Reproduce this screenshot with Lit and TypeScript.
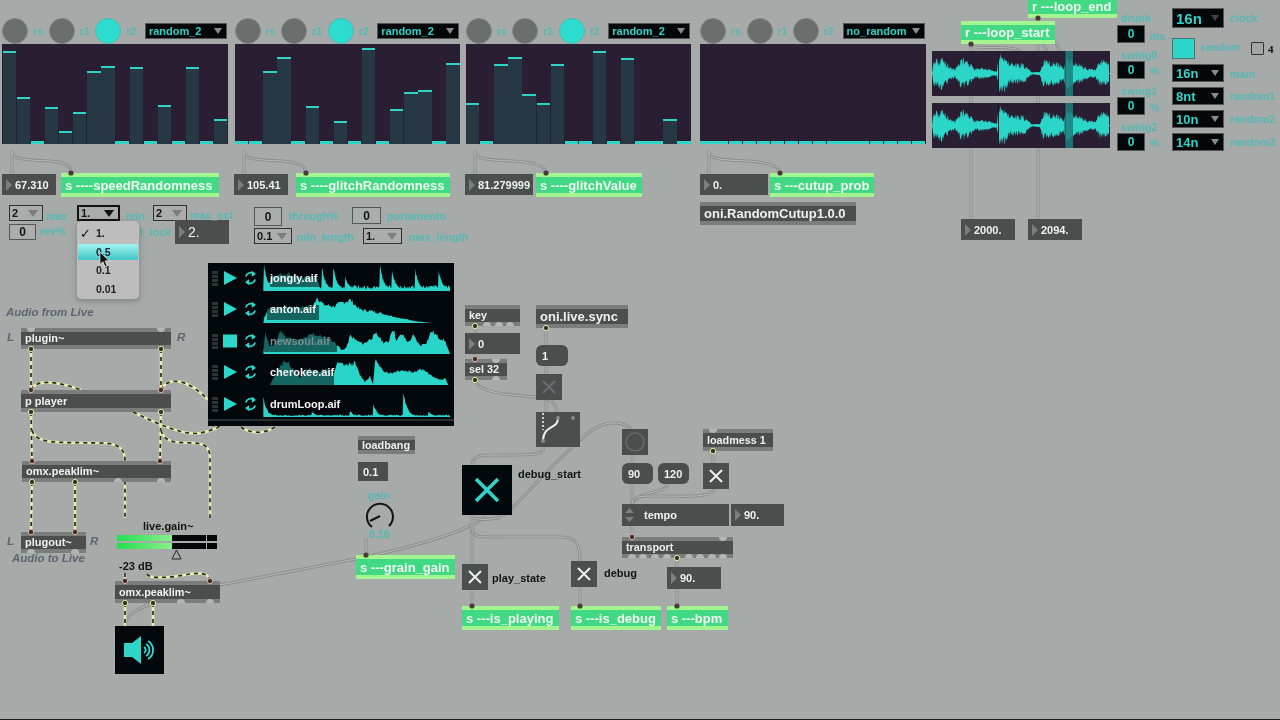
import { LitElement, html, svg, css } from "lit";
import { customElement } from "lit/decorators.js";

// max patch canvas: everything below is placed by patch coordinates
const TEAL = "#2dd6c9";

function rng(seed: number) {
  let s = seed;
  return () => {
    s = (s * 9301 + 49297) % 233280;
    return s / 233280;
  };
}

function interp(pts: number[][], x: number) {
  for (let i = 1; i < pts.length; i++) {
    if (x <= pts[i][0]) {
      const [x0, y0] = pts[i - 1];
      const [x1, y1] = pts[i];
      return y0 + ((y1 - y0) * (x - x0)) / (x1 - x0 || 1);
    }
  }
  return 0;
}

// pts come from the 3x crops, so x/3 and h/3 gets back to patch pixels
function hillPath(pts: number[][], base: number, seed: number) {
  const r = rng(seed);
  let d = "";
  const x0 = pts[0][0];
  const x1 = pts[pts.length - 1][0];
  for (let x = x0; x <= x1; x += 3) {
    const h = (interp(pts, x) * (0.88 + r() * 0.24)) / 3;
    d += `${d ? "L" : "M"}${200 + x / 3} ${base - h} `;
  }
  return `${d}L${200 + x1 / 3} ${base} L${200 + x0 / 3} ${base} Z`;
}

function spikePath(spikes: number[][], x0: number, x1: number, base: number, floor: number, tau: number, seed: number) {
  const r = rng(seed);
  let d = `M${200 + x0 / 3} ${base} `;
  for (let x = x0; x <= x1; x += 2) {
    let h = floor * (0.5 + r());
    for (const [sx, sh] of spikes) {
      if (x >= sx) h = Math.max(h, sh * Math.exp(-(x - sx) / tau) * (0.85 + r() * 0.2));
    }
    d += `L${200 + x / 3} ${base - h / 3} `;
  }
  return `${d}L${200 + x1 / 3} ${base} Z`;
}

function mirrorPath(pts: number[][], mid: number, seed: number) {
  const r = rng(seed);
  const up: string[] = [];
  const down: string[] = [];
  for (let x = pts[0][0]; x <= pts[pts.length - 1][0]; x += 1.5) {
    const a = interp(pts, x) / 3;
    const px = 900 + x / 3;
    up.push(`${px} ${mid - a * (0.6 + r() * 0.7)}`);
    down.unshift(`${px} ${mid + a * (0.6 + r() * 0.7)}`);
  }
  return `M${up.join(" L")} L${down.join(" L")} Z`;
}

const PANELS = [
  { x: 2.3, on: 2, menu: "random_2", bars: [153, 290, 430, 322, 394, 335, 214, 198, 430, 202, 430, 315, 430, 202, 430, 358] },
  { x: 234.7, on: 2, menu: "random_2", bars: [430, 430, 214, 172, 430, 319, 430, 364, 430, 143, 430, 328, 276, 269, 430, 188] },
  { x: 465.7, on: 2, menu: "random_2", bars: [309, 430, 191, 172, 283, 309, 191, 430, 430, 153, 430, 175, 430, 430, 357, 430] },
  { x: 700, on: -1, menu: "no_random", bars: Array(16).fill(430) },
];

type Node = { k: string; x: number; y: number; w: number; h: number; t?: string; c?: string };

const NODES: Node[] = [
  { k: "grn", x: 1028, y: -6, w: 89, h: 24, t: "r ---loop_end" },
  { k: "grn", x: 961, y: 21, w: 94, h: 23, t: "r ---loop_start" },
  { k: "num", x: 2, y: 174, w: 54, h: 21, t: "67.310" },
  { k: "grn", x: 61, y: 173, w: 158, h: 24, t: "s ----speedRandomness" },
  { k: "num", x: 234, y: 174, w: 54, h: 21, t: "105.41" },
  { k: "grn", x: 296, y: 173, w: 154, h: 24, t: "s ----glitchRandomness" },
  { k: "num", x: 465, y: 174, w: 68, h: 21, t: "81.279999" },
  { k: "grn", x: 536, y: 173, w: 106, h: 24, t: "s ----glitchValue" },
  { k: "num", x: 700, y: 174, w: 68, h: 21, t: "0." },
  { k: "grn", x: 770, y: 173, w: 104, h: 24, t: "s ---cutup_prob" },
  { k: "obj", x: 700, y: 202, w: 156, h: 23, t: "oni.RandomCutup1.0.0", c: "big" },
  { k: "num", x: 961, y: 219, w: 54, h: 21, t: "2000." },
  { k: "num", x: 1028, y: 219, w: 54, h: 21, t: "2094." },

  { k: "lmenu", x: 9, y: 205, w: 34, h: 16, t: "2" },
  { k: "lmenu", x: 77, y: 205, w: 43, h: 16, t: "1.", c: "focus" },
  { k: "lmenu", x: 153, y: 205, w: 34, h: 16, t: "2" },
  { k: "lnum", x: 9, y: 224, w: 27, h: 16, t: "0" },
  { k: "num", x: 175, y: 220, w: 54, h: 24, t: "2.", c: "big" },
  { k: "lnum", x: 254, y: 207, w: 28, h: 19, t: "0" },
  { k: "lnum", x: 352, y: 207, w: 29, h: 17, t: "0" },
  { k: "lmenu", x: 254, y: 228, w: 38, h: 16, t: "0.1" },
  { k: "lmenu", x: 363, y: 228, w: 39, h: 16, t: "1." },

  { k: "obj", x: 21, y: 328, w: 150, h: 21, t: "plugin~" },
  { k: "obj", x: 21, y: 390, w: 150, h: 22, t: "p player" },
  { k: "obj", x: 22, y: 461, w: 149, h: 21, t: "omx.peaklim~" },
  { k: "obj", x: 21, y: 532, w: 65, h: 21, t: "plugout~" },
  { k: "obj", x: 115, y: 581, w: 105, h: 22, t: "omx.peaklim~", c: "tiny" },

  { k: "obj", x: 358, y: 436, w: 57, h: 18, t: "loadbang", c: "tiny" },
  { k: "num0", x: 358, y: 462, w: 30, h: 19, t: "0.1" },
  { k: "grn", x: 356, y: 555, w: 99, h: 24, t: "s ---grain_gain" },

  { k: "obj", x: 465, y: 305, w: 55, h: 21, t: "key", c: "tiny" },
  { k: "num", x: 465, y: 333, w: 55, h: 21, t: "0" },
  { k: "obj", x: 465, y: 359, w: 42, h: 21, t: "sel 32", c: "tiny" },
  { k: "obj", x: 536, y: 305, w: 92, h: 23, t: "oni.live.sync", c: "big" },
  { k: "msg", x: 536, y: 345, w: 32, h: 21, t: "1" },
  { k: "msg", x: 622, y: 463, w: 31, h: 21, t: "90" },
  { k: "msg", x: 658, y: 463, w: 31, h: 21, t: "120" },
  { k: "obj", x: 703, y: 429, w: 70, h: 22, t: "loadmess 1", c: "tiny" },
  { k: "num", x: 731, y: 504, w: 53, h: 22, t: "90." },
  { k: "obj", x: 622, y: 537, w: 111, h: 21, t: "transport", c: "tiny" },
  { k: "num", x: 667, y: 567, w: 54, h: 22, t: "90." },
  { k: "grn", x: 462, y: 606, w: 97, h: 24, t: "s ---is_playing" },
  { k: "grn", x: 571, y: 606, w: 90, h: 24, t: "s ---is_debug" },
  { k: "grn", x: 667, y: 606, w: 61, h: 24, t: "s ---bpm" },

  { k: "bnum", x: 1117, y: 25, w: 28, h: 18, t: "0" },
  { k: "bnum", x: 1117, y: 61, w: 28, h: 18, t: "0" },
  { k: "bnum", x: 1117, y: 97, w: 28, h: 18, t: "0" },
  { k: "bnum", x: 1117, y: 133, w: 28, h: 18, t: "0" },
  { k: "bmenu", x: 1172, y: 8, w: 52, h: 20, t: "16n", c: "hollow" },
  { k: "bmenu", x: 1172, y: 64, w: 52, h: 18, t: "16n" },
  { k: "bmenu", x: 1172, y: 87, w: 52, h: 18, t: "8nt" },
  { k: "bmenu", x: 1172, y: 110, w: 52, h: 18, t: "10n" },
  { k: "bmenu", x: 1172, y: 133, w: 52, h: 18, t: "14n" },
];

const LABELS: { x: number; y: number; t: string; c: string }[] = [
  { x: 46, y: 216, t: "max", c: "teal" },
  { x: 126, y: 216, t: "min", c: "teal" },
  { x: 190, y: 215, t: "max_oct", c: "teal" },
  { x: 40, y: 231, t: "rev%", c: "teal" },
  { x: 140, y: 232, t: "t_lock", c: "teal" },
  { x: 289, y: 216, t: "through%", c: "teal" },
  { x: 387, y: 216, t: "portamento", c: "teal" },
  { x: 297, y: 237, t: "min_length", c: "teal" },
  { x: 409, y: 237, t: "max_length", c: "teal" },
  { x: 1121, y: 18, t: "drunk", c: "teal" },
  { x: 1150, y: 36, t: "ms", c: "teal" },
  { x: 1121, y: 55, t: "swing0", c: "teal" },
  { x: 1150, y: 71, t: "%", c: "teal" },
  { x: 1121, y: 91, t: "swing1", c: "teal" },
  { x: 1150, y: 107, t: "%", c: "teal" },
  { x: 1121, y: 127, t: "swing2", c: "teal" },
  { x: 1150, y: 143, t: "%", c: "teal" },
  { x: 1230, y: 18, t: "clock", c: "teal" },
  { x: 1201, y: 47, t: "random", c: "teal" },
  { x: 1230, y: 74, t: "main", c: "teal" },
  { x: 1230, y: 96, t: "random1", c: "teal" },
  { x: 1230, y: 119, t: "random2", c: "teal" },
  { x: 1230, y: 142, t: "random3", c: "teal" },
  { x: 368, y: 495, t: "gain", c: "teal" },
  { x: 369, y: 534, t: "0.10", c: "teal" },
  { x: 1268, y: 49, t: "4", c: "serif" },
  { x: 6, y: 312, t: "Audio from Live", c: "slate" },
  { x: 12, y: 558, t: "Audio to Live", c: "slate" },
  { x: 7, y: 337, t: "L", c: "slate" },
  { x: 177, y: 337, t: "R", c: "slate" },
  { x: 7, y: 541, t: "L", c: "slate" },
  { x: 90, y: 541, t: "R", c: "slate" },
  { x: 143, y: 526, t: "live.gain~", c: "dark" },
  { x: 119, y: 566, t: "-23 dB", c: "dark" },
  { x: 518, y: 474, t: "debug_start", c: "dark" },
  { x: 492, y: 578, t: "play_state", c: "dark" },
  { x: 604, y: 573, t: "debug", c: "dark" },
];

const TOGGLES = [
  { x: 536, y: 374, c: "dim" },
  { x: 703, y: 463, c: "" },
  { x: 462, y: 564, c: "" },
  { x: 571, y: 561, c: "" },
];

const GREY_WIRES = [
  "M12 150 L12 174 M12 152 C12 160 30 160 50 161 C64 162 71 165 71 173",
  "M244 150 L244 174 M244 152 C244 160 262 160 282 161 C296 162 306 165 306 173",
  "M475 150 L475 174 M475 152 C475 160 493 160 513 161 C530 162 546 165 546 173",
  "M709 150 L709 174 M709 152 C709 160 727 160 747 161 C764 162 780 165 780 173",
  "M971 44 L971 219 M1038 18 L1038 219",
  "M972 46 C976 50 1015 44 1020 52 M1040 40 C1044 45 1046 48 1047 52 M1052 40 C1056 44 1059 46 1060 52",
  "M366 538 L366 555 M220 585 L366 557 C420 545 470 530 486 516",
  "M546 328 L546 345 M546 366 L546 374 M546 400 L546 412",
  "M475 380 C478 392 500 394 535 397 C550 398 558 402 558 418",
  "M544 447 C544 456 530 455 490 455 C476 455 472 460 472 465",
  "M632 430 C625 422 610 420 595 428 C570 445 530 490 515 505 C505 518 490 522 472 518",
  "M472 515 L472 606",
  "M472 528 C472 538 480 537 500 537 L560 537 C575 537 580 542 580 561 M580 587 L580 606",
  "M632 455 L632 463 M632 484 L632 504 M668 484 C668 493 640 490 632 504",
  "M714 489 C712 498 690 496 650 496 C638 496 632 498 632 504",
  "M713 451 L713 463 M632 526 L632 537 M677 558 L677 567 M677 589 L677 606",
  "M475 326 L475 333 M475 354 L475 359",
  "M153 603 C140 608 125 614 125 626",
];

const AUDIO_WIRES = [
  "M31 349 L31 390 M161 349 L161 390",
  "M31 412 L32 461 M161 412 L160 461",
  "M31 390 C36 378 60 382 81 390",
  "M161 390 C168 375 190 380 208 400",
  "M133 412 C160 425 185 436 200 433 C210 431 218 428 220 426",
  "M241 427 C250 434 265 434 275 427",
  "M32 430 C36 445 60 442 100 443 C120 443 125 450 125 461 L125 518",
  "M161 430 C165 445 180 442 195 443 C208 444 210 450 210 460 L210 518",
  "M32 482 L31 532 M75 482 L75 532",
  "M125 573 L125 581 M125 603 L125 626 M153 603 L153 626",
  "M147 574 C150 580 175 577 190 574 C205 572 209 575 210 581",
];

// x, y, inlet or outlet, cable attached
const PORTS: [number, number, "i" | "o", boolean][] = [
  [31, 328, "i", false], [161, 328, "i", false], [31, 349, "o", true], [161, 349, "o", true],
  [31, 390, "i", true], [161, 390, "i", true], [31, 412, "o", true], [161, 412, "o", true],
  [32, 461, "i", true], [160, 461, "i", true], [32, 482, "o", true], [75, 482, "o", true], [118, 482, "o", false], [161, 482, "o", false],
  [31, 532, "i", true], [75, 532, "i", true], [31, 553, "o", false], [75, 553, "o", false],
  [125, 581, "i", true], [210, 581, "i", true], [125, 603, "o", true], [153, 603, "o", true], [181, 603, "o", false], [210, 603, "o", false],
  [475, 326, "o", true], [487, 326, "o", false], [499, 326, "o", false], [510, 326, "o", false],
  [475, 359, "i", true], [496, 359, "i", false], [475, 380, "o", true], [496, 380, "o", false],
  [546, 328, "o", true], [713, 429, "i", false], [713, 451, "o", true],
  [632, 537, "i", true], [723, 537, "i", false],
  [632, 558, "o", false], [643, 558, "o", false], [655, 558, "o", false], [667, 558, "o", false], [677, 558, "o", true],
  [689, 558, "o", false], [700, 558, "o", false], [712, 558, "o", false], [723, 558, "o", false],
];
const SEND_DOTS = [
  [71, 173], [306, 173], [546, 173], [780, 173], [366, 555], [472, 606], [580, 606], [677, 606], [971, 44], [1038, 18],
];

// shade = the see-through block behind each file name [x, y, w, h]
const TRACKS = [
  {
    name: "jongly.aif", y: 278, stop: false, shade: [270, 264, 50, 23],
    d: spikePath([[192, 78], [265, 74], [365, 78], [400, 72], [435, 50], [540, 78], [575, 70], [645, 72], [715, 70]], 190, 750, 291, 12, 12, 3),
    extra: hillPath([[205, 15], [215, 45], [260, 50], [300, 40], [350, 45], [362, 0]], 291, 4),
  },
  {
    name: "anton.aif", y: 309, stop: false, shade: [267, 305, 52, 15],
    d: hillPath([[190, 0], [192, 15], [205, 45], [340, 50], [350, 80], [370, 55], [400, 50], [450, 70], [480, 40], [520, 35], [560, 25], [600, 15], [650, 5], [695, 0]], 323, 7),
    extra: "",
  },
  {
    name: "newsoul.aif", y: 341, stop: true, shade: [264, 331, 73, 21],
    d: hillPath([[190, 0], [196, 70], [208, 25], [224, 25], [240, 70], [260, 50], [300, 40], [340, 60], [390, 45], [415, 25], [425, 10], [440, 20], [450, 55], [470, 40], [490, 30], [510, 45], [530, 60], [550, 35], [565, 35], [578, 80], [590, 40], [605, 60], [625, 35], [640, 55], [660, 25], [680, 35], [695, 70], [715, 50], [735, 40], [750, 0]], 354, 11),
    extra: "",
  },
  {
    name: "cherokee.aif", y: 372, stop: false, shade: [268, 360, 66, 25],
    d: hillPath([[210, 0], [225, 30], [255, 75], [280, 50], [300, 20], [320, 50], [350, 40], [380, 50], [400, 30], [410, 65], [440, 60], [465, 65], [480, 30], [495, 10], [510, 25], [520, 0], [525, 80], [540, 50], [570, 35], [600, 45], [640, 40], [665, 50], [690, 30], [720, 15], [735, 20], [745, 0]], 385, 13),
    extra: "",
  },
  {
    name: "drumLoop.aif", y: 404, stop: false, shade: [268, 398, 72, 15],
    d: spikePath([[190, 60], [335, 20], [450, 20], [520, 40], [610, 80], [685, 20]], 190, 750, 417, 5, 12, 5),
    extra: "",
  },
];

const TOP_WAVE = [[96, 2], [100, 30], [125, 40], [150, 20], [165, 10], [185, 40], [205, 30], [225, 12], [250, 15], [270, 10], [290, 5], [296, 40], [305, 55], [330, 25], [370, 25], [395, 3], [420, 5], [430, 35], [470, 30], [490, 15], [498, 45], [520, 30], [560, 15], [585, 10], [600, 35], [628, 30]];

@customElement("app-root")
export class AppRoot extends LitElement {
  static styles = css`
    :host {
      display: block;
      position: relative;
      width: 1280px;
      height: 720px;
      overflow: hidden;
      background: #a6aaa9;
      font-family: "Liberation Sans", Arial, sans-serif;
      font-weight: 700;
      filter: blur(0.4px);
    }
    .wires, .ports {
      position: absolute;
      inset: 0;
      width: 1280px;
      height: 720px;
    }
    .ports { pointer-events: none; }
    .at { position: absolute; box-sizing: border-box; }

    .panel { position: absolute; top: 17px; width: 225.6px; }
    .head { display: flex; align-items: center; height: 27px; }
    .slot { display: flex; align-items: center; width: 46.5px; flex: none; }
    .circle {
      width: 26px;
      height: 26px;
      border-radius: 50%;
      background: #6c6d6d;
      border: 1px solid #7f8382;
      box-sizing: border-box;
      flex: none;
    }
    .circle.on { background: #2bdccf; border-color: #4fb7ae; }
    .tag { margin-left: 5px; font-size: 10.5px; color: #55b9b6; filter: blur(0.5px); }
    .head .bmenu { margin-left: auto; margin-right: 1px; width: 82px; height: 16px; font-size: 11px; }
    .slider {
      display: flex;
      align-items: flex-end;
      height: 100px;
      background: #2a1e32;
    }
    .bar {
      flex: 1;
      box-sizing: border-box;
      margin: 0 0.4px;
      background: #263844;
      border-top: 2px solid #2fd3c8;
    }
    .bar.zero { height: 3px; border-top-width: 3px; }

    .obj {
      display: flex;
      align-items: center;
      padding: 0 0 1px 4px;
      background: #4c4e4e;
      border-top: 4px solid #7b7d7d;
      border-bottom: 4px solid #7b7d7d;
      color: #f0f0f0;
      font-size: 11px;
      white-space: nowrap;
    }
    .obj.tiny { font-size: 10.8px; }
    .obj.big { font-size: 13px; }
    .grn {
      display: flex;
      align-items: center;
      padding-left: 4px;
      background: #41d983;
      border-top: 4px solid #a4f590;
      border-bottom: 4px solid #a4f590;
      color: #f2f7f2;
      font-size: 13px;
      white-space: nowrap;
    }
    .num, .num0, .msg {
      display: flex;
      align-items: center;
      background: #4c4e4e;
      color: #f0f0f0;
      font-size: 11px;
      white-space: nowrap;
    }
    .num::before {
      content: "";
      flex: none;
      margin: 0 3px 0 4px;
      border-left: 6px solid #7c7e7e;
      border-top: 6px solid transparent;
      border-bottom: 6px solid transparent;
    }
    .num.big { font-size: 14px; font-weight: 400; }
    .num0 { padding-left: 5px; }
    .msg { padding-left: 6px; border-radius: 6px; }
    .lmenu, .lnum {
      display: flex;
      align-items: center;
      background: #a9adac;
      border: 1px solid #333;
      color: #151515;
      font-size: 11px;
    }
    .lmenu { padding-left: 2px; justify-content: space-between; }
    .lmenu::after {
      content: "";
      margin-right: 4px;
      border-top: 7px solid #7c7e7e;
      border-left: 5px solid transparent;
      border-right: 5px solid transparent;
    }
    .lmenu.focus { border: 2px solid #111; }
    .lmenu.focus::after { border-top-color: #111; }
    .lnum { justify-content: center; font-size: 12px; border-color: #555; }
    .bmenu, .bnum {
      display: flex;
      align-items: center;
      box-sizing: border-box;
      background: #03070a;
      border: 1px solid #555;
      color: #2fd3c8;
    }
    .bmenu { justify-content: space-between; padding-left: 3px; font-size: 13px; }
    .bmenu::after {
      content: "";
      margin-right: 4px;
      border-top: 6px solid #8a8c8c;
      border-left: 4px solid transparent;
      border-right: 4px solid transparent;
    }
    .bmenu.hollow { font-size: 15px; }
    .bmenu.hollow::after { border-top-color: #444; }
    .bnum { justify-content: center; font-size: 12px; }

    .label { position: absolute; transform: translateY(-50%); white-space: nowrap; }
    .label.teal { font-size: 10.7px; color: #55b9b6; filter: blur(0.6px); }
    .label.dark { font-size: 11px; color: #141414; }
    .label.slate { font-size: 11.5px; font-style: italic; color: #5c6572; }
    .label.serif { font-family: "Liberation Serif", serif; font-size: 11px; color: #111; }

    .popup {
      left: 77px;
      top: 221px;
      width: 62px;
      height: 78px;
      display: flex;
      flex-direction: column;
      padding-top: 2px;
      background: #bdbdbd;
      border-radius: 5px;
      box-shadow: 0 2px 6px rgba(0, 0, 0, 0.25);
      color: #222;
      font-size: 10.5px;
    }
    .item { display: flex; align-items: center; height: 18.5px; padding-left: 19px; position: relative; }
    .item.sel {
      color: #223;
      background: linear-gradient(#a4f4f2, #3fc6c6);
      height: 16px;
      margin: 1px 1px;
      padding-left: 18px;
    }
    .check { position: absolute; left: 3px; font-size: 13px; color: #111; font-weight: 400; }
    .item.first { height: 20px; }

    .player { left: 208px; top: 263px; width: 246px; height: 163px; background: #03080c; }
    .player svg { display: block; }
    .track {
      position: absolute;
      transform: translateY(-50%);
      left: 62px;
      color: #f4f4f4;
      font-size: 11px;
      white-space: nowrap;
    }
    .track.stopped { color: #7b8d8d; }

    .toggle { background: #4c4e4e; }
    .toggle svg, .bigx svg, .speaker svg, .matrix svg { display: block; width: 100%; height: 100%; }
    .bigx, .speaker { background: #03080c; }
    .matrix, .bang { background: #4c4e4e; }
    .swatch { background: #2dd6c9; border: 1px solid #50706e; }
    .check-box { background: #a4a6a6; border: 1px solid #333; border-radius: 1px; }
    .meter {
      display: flex;
      flex-direction: column;
      gap: 2px;
    }
    .meter-row { display: flex; height: 6px; background: #05060a; }
    .meter-fill { width: 55px; background: linear-gradient(90deg, #22e050, #8bf08a); }
    .meter-gap { margin-left: 34px; width: 1px; background: #a6aaa9; }
    .tempo {
      display: flex;
      align-items: center;
      gap: 10px;
      padding-left: 3px;
      background: #4c4e4e;
      color: #f0f0f0;
      font-size: 11px;
    }
    .cursor { left: 99px; top: 251px; width: 12px; height: 18px; }
    .strip { left: 0; bottom: 0; width: 1280px; height: 1px; background: #1c1e1e; }
  `;

  box(n: { x: number; y: number; w: number; h: number }) {
    return `left:${n.x}px;top:${n.y}px;width:${n.w}px;height:${n.h}px`;
  }

  renderWires() {
    return html`<svg class="wires" viewBox="0 0 1280 720" fill="none">
      ${GREY_WIRES.map((d) => svg`
        <path d=${d} stroke="#8a8e8d" stroke-width="3"></path>
        <path d=${d} stroke="#b9bbba" stroke-width="1"></path>`)}
      ${AUDIO_WIRES.map((d) => svg`
        <path d=${d} stroke="#e4eeb0" stroke-width="2.6"></path>
        <path d=${d} stroke="#2a2c24" stroke-width="1.7" stroke-dasharray="4 4"></path>`)}
    </svg>`;
  }

  renderPorts() {
    return html`<svg class="ports" viewBox="0 0 1280 720">
      ${PORTS.map(([x, y, kind, used]) => {
        if (used) {
          return svg`<circle cx=${x} cy=${y} r="2.7" fill="#33352f" stroke=${kind === "i" ? "#e6a9a0" : "#dfe79a"} stroke-width="1"></circle>`;
        }
        const sweep = kind === "i" ? 0 : 1;
        return svg`<path d="M${x - 4} ${y} A4 4 0 0 ${sweep} ${x + 4} ${y} Z" fill="#b4b6b6"></path>`;
      })}
      ${SEND_DOTS.map(([x, y]) => svg`<circle cx=${x} cy=${y} r="2.6" fill="#4a3a38"></circle>`)}
    </svg>`;
  }

  renderPanel(p: (typeof PANELS)[number]) {
    return html`<div class="panel" style="left:${p.x}px">
      <div class="head">
        ${["rs", "r1", "r2"].map(
          (t, i) => html`<div class="slot">
            <div class="circle ${i === p.on ? "on" : ""}"></div>
            <span class="tag">${t}</span>
          </div>`
        )}
        <div class="bmenu">${p.menu}</div>
      </div>
      <div class="slider">
        ${p.bars.map((v) =>
          v >= 430
            ? html`<div class="bar zero"></div>`
            : html`<div class="bar" style="height:${(432 - v) / 3}px"></div>`
        )}
      </div>
    </div>`;
  }

  renderPlayer() {
    return html`<div class="at player">
      <svg width="246" height="163" viewBox="208 263 246 163">
        ${TRACKS.map((t) => svg`
          ${t.extra ? svg`<path d=${t.extra} fill="#29d4c8"></path>` : ""}
          <path d=${t.d} fill="#29d4c8"></path>
          <rect x=${t.shade[0]} y=${t.shade[1]} width=${t.shade[2]} height=${t.shade[3]} fill="#03080c" opacity="0.55"></rect>
          <g fill="#2b3436">
            ${[0, 1, 2, 3].map((i) => svg`<rect x="212" y=${t.y - 7 + i * 4} width="6" height="3"></rect>`)}
          </g>
          ${t.stop
            ? svg`<rect x="223" y=${t.y - 6.5} width="14" height="13" fill="#2bd8cb"></rect>`
            : svg`<path d="M224 ${t.y - 7} L237 ${t.y} L224 ${t.y + 7} Z" fill="#2bd8cb"></path>`}
          <g fill="none" stroke="#2bd8cb" stroke-width="1.7" transform="translate(250.5 ${t.y})">
            <path d="M-4.6 -1.5 A4.8 4.8 0 0 1 3 -4.4"></path>
            <path d="M4.6 1.5 A4.8 4.8 0 0 1 -3 4.4"></path>
            <path d="M1.4 -6.6 L4.4 -4 L1.4 -2" stroke-width="1.3" fill="#2bd8cb"></path>
            <path d="M-1.4 6.6 L-4.4 4 L-1.4 2" stroke-width="1.3" fill="#2bd8cb"></path>
          </g>
        `)}
        <rect x="208" y="419" width="246" height="2" fill="#2a2f31"></rect>
      </svg>
      ${TRACKS.map(
        (t) => html`<div class="track ${t.stop ? "stopped" : ""}" style="top:${t.y - 263}px">${t.name}</div>`
      )}
    </div>`;
  }

  renderWave(y: number, seed: number) {
    return svg`
      <rect x="932" y=${y} width="178" height="45" fill="#2a1e32"></rect>
      <path d=${mirrorPath(TOP_WAVE, y + 22.5, seed)} fill="#2bd6c9"></path>
      <rect x="932" y=${y + 22} width="178" height="1" fill="#2bd6c9"></rect>
      <rect x="998" y=${y} width="1" height="45" fill="#1c1726"></rect>
      <rect x="1065" y=${y} width="8" height="45" fill="#1c7f7e" opacity="0.85"></rect>
      <rect x="1064.5" y=${y} width="1" height="45" fill="#1c1726" opacity="0.6"></rect>`;
  }

  renderX(color: string, w: number) {
    return svg`<path d="M7 7 L19 19 M19 7 L7 19" stroke=${color} stroke-width=${w} fill="none"></path>`;
  }

  render() {
    return html`
      ${this.renderWires()}
      ${PANELS.map((p) => this.renderPanel(p))}
      <svg class="wires" viewBox="0 0 1280 720">${this.renderWave(51, 21)}${this.renderWave(103, 21)}</svg>

      ${NODES.map(
        (n) => html`<div class="at ${n.k} ${n.c ?? ""}" style=${this.box(n)}><span>${n.t}</span></div>`
      )}
      ${LABELS.map((l) => html`<div class="label ${l.c}" style="left:${l.x}px;top:${l.y}px">${l.t}</div>`)}

      <div class="at tempo" style=${this.box({ x: 622, y: 504, w: 107, h: 22 })}>
        <svg width="9" height="14" viewBox="0 0 9 14">
          <path d="M4.5 0 L9 5 L0 5 Z M4.5 14 L9 9 L0 9 Z" fill="#7c7e7e"></path>
        </svg>
        <span>tempo</span>
      </div>

      ${TOGGLES.map(
        (t) => html`<div class="at toggle" style=${this.box({ x: t.x, y: t.y, w: 26, h: 26 })}>
          <svg viewBox="0 0 26 26">${t.c === "dim" ? this.renderX("#6a6d6d", 2) : this.renderX("#eef0ef", 2)}</svg>
        </div>`
      )}
      <div class="at bigx" style=${this.box({ x: 462, y: 465, w: 50, h: 50 })}>
        <svg viewBox="0 0 50 50">
          <path d="M14 14 L36 36 M36 14 L14 36" stroke=${TEAL} stroke-width="3.6" fill="none"></path>
        </svg>
      </div>
      <div class="at bang" style=${this.box({ x: 622, y: 429, w: 26, h: 26 })}>
        <svg width="26" height="26" viewBox="0 0 26 26">
          <circle cx="13" cy="13" r="9" fill="none" stroke="#666969" stroke-width="1.6"></circle>
        </svg>
      </div>
      <div class="at matrix" style=${this.box({ x: 536, y: 412, w: 44, h: 35 })}>
        <svg viewBox="0 0 44 35">
          <path d="M7 1 L7 18" stroke="#eee" stroke-width="1.6" stroke-dasharray="2 2" fill="none"></path>
          <path d="M22 6 C22 18 8 12 7 28" stroke="#eee" stroke-width="2" fill="none"></path>
          <circle cx="22" cy="6" r="2" fill="#8a8c8c"></circle>
          <circle cx="37" cy="6" r="2" fill="#8a8c8c"></circle>
          <circle cx="7" cy="29" r="2" fill="#8a8c8c"></circle>
        </svg>
      </div>
      <div class="at speaker" style=${this.box({ x: 115, y: 626, w: 49, h: 48 })}>
        <svg viewBox="0 0 49 48">
          <path d="M9 17 L17 17 L26 10 L26 38 L17 31 L9 31 Z" fill=${TEAL}></path>
          <path d="M29 21 A3.5 3.5 0 0 1 29 27 M31 18 A7 7 0 0 1 31 30 M33 15 A10.5 10.5 0 0 1 33 33" stroke=${TEAL} stroke-width="1.9" fill="none"></path>
        </svg>
      </div>
      <div class="at swatch" style=${this.box({ x: 1172, y: 38, w: 23, h: 21 })}></div>
      <div class="at check-box" style=${this.box({ x: 1251, y: 42, w: 13, h: 13 })}></div>

      <div class="at meter" style=${this.box({ x: 117, y: 535, w: 100, h: 14 })}>
        <div class="meter-row"><div class="meter-fill"></div><div class="meter-gap"></div></div>
        <div class="meter-row"><div class="meter-fill"></div><div class="meter-gap"></div></div>
      </div>
      <svg class="ports" viewBox="0 0 1280 720" fill="none">
        <path d="M176.5 550 L181 559 L172 559 Z" stroke="#222" stroke-width="1"></path>
        <path d="M372 527 A13 13 0 1 1 389 526" stroke="#141414" stroke-width="2"></path>
        <path d="M380 516 L370 521" stroke="#141414" stroke-width="2"></path>
      </svg>

      ${this.renderPlayer()}
      ${this.renderPorts()}

      <div class="at popup">
        <div class="item first"><span class="check">✓</span>1.</div>
        <div class="item sel">0.5</div>
        <div class="item">0.1</div>
        <div class="item">0.01</div>
      </div>
      <svg class="at cursor" viewBox="0 0 14 21">
        <path d="M1 1 L1 16 L4.6 12.6 L7 18.5 L9.6 17.4 L7.2 11.6 L12 11.4 Z" fill="#111" stroke="#eee" stroke-width="1"></path>
      </svg>
      <div class="at strip"></div>
    `;
  }
}
